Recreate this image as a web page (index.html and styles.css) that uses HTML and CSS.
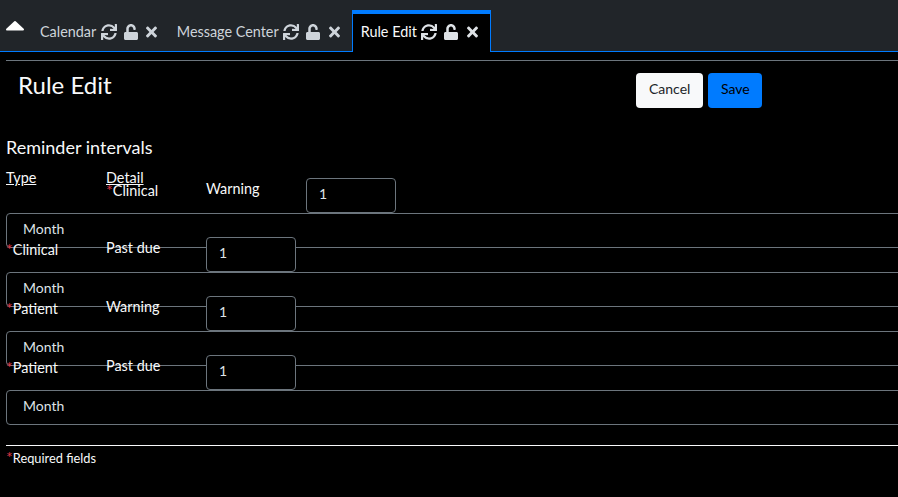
FILE: index.html
```html
<!DOCTYPE html>
<html lang="en">
<head>
<meta charset="utf-8">
<title>Rule Edit</title>
<link rel="stylesheet" href="styles.css">
</head>
<body>
<svg class="defs" width="0" height="0" aria-hidden="true">
  <symbol id="i-sync" viewBox="0 0 512 512"><path d="M440.65 12.57l4 82.77A247.16 247.16 0 0 0 255.83 8C134.73 8 33.91 94.92 12.29 209.82A12 12 0 0 0 24.09 224h49.05a12 12 0 0 0 11.67-9.26 175.91 175.91 0 0 1 317-56.94l-101.46-4.86a12 12 0 0 0-12.57 12v47.41a12 12 0 0 0 12 12H500a12 12 0 0 0 12-12V12a12 12 0 0 0-12-12h-47.37a12 12 0 0 0-11.98 12.57zM255.83 432a175.61 175.61 0 0 1-146-77.8l101.8 4.87a12 12 0 0 0 12.57-12v-47.4a12 12 0 0 0-12-12H12a12 12 0 0 0-12 12V500a12 12 0 0 0 12 12h47.35a12 12 0 0 0 12-12.6l-4.15-82.57A247.17 247.17 0 0 0 255.83 504c121.11 0 221.93-86.92 243.55-201.82a12 12 0 0 0-11.8-14.18h-49.05a12 12 0 0 0-11.67 9.26A175.86 175.86 0 0 1 255.83 432z"/></symbol>
  <symbol id="i-unlock" viewBox="0 0 448 512"><path d="M400 256H152V152.9c0-39.6 31.7-72.5 71.3-72.9 40-.4 72.7 32.1 72.7 72v16c0 13.3 10.7 24 24 24h32c13.3 0 24-10.7 24-24v-16C376 68 307.5-.3 223.5 0 139.5.3 72 69.5 72 153.5V256H48c-26.5 0-48 21.5-48 48v160c0 26.5 21.5 48 48 48h352c26.5 0 48-21.5 48-48V304c0-26.5-21.5-48-48-48z"/></symbol>
  <symbol id="i-times" viewBox="0 0 352 512"><path d="M242.72 256l100.07-100.07c12.28-12.28 12.28-32.19 0-44.48l-22.24-22.24c-12.28-12.28-32.19-12.28-44.48 0L176 189.28 75.93 89.21c-12.28-12.28-32.19-12.28-44.48 0L9.21 111.45c-12.28 12.28-12.28 32.19 0 44.48L109.28 256 9.21 356.07c-12.28 12.28-12.28 32.19 0 44.48l22.24 22.24c12.28 12.28 32.2 12.28 44.48 0L176 322.72l100.07 100.07c12.28 12.28 32.2 12.28 44.48 0l22.24-22.24c12.28-12.28 12.28-32.19 0-44.48L242.72 256z"/></symbol>
</svg>

<nav class="tabbar">
  <svg class="collapse" viewBox="0 0 20 11" width="20" height="11" aria-hidden="true"><polygon points="2,9.5 18,9.5 10,2"/></svg>
  <div class="tab">
    <span class="tab-label">Calendar</span>
    <svg class="ic ic-sync"><use href="#i-sync"/></svg>
    <svg class="ic ic-unlock"><use href="#i-unlock"/></svg>
    <svg class="ic ic-times"><use href="#i-times"/></svg>
  </div>
  <div class="tab">
    <span class="tab-label">Message Center</span>
    <svg class="ic ic-sync"><use href="#i-sync"/></svg>
    <svg class="ic ic-unlock"><use href="#i-unlock"/></svg>
    <svg class="ic ic-times"><use href="#i-times"/></svg>
  </div>
  <div class="tab active">
    <span class="tab-label">Rule Edit</span>
    <svg class="ic ic-sync"><use href="#i-sync"/></svg>
    <svg class="ic ic-unlock"><use href="#i-unlock"/></svg>
    <svg class="ic ic-times"><use href="#i-times"/></svg>
  </div>
</nav>

<main class="page">
  <hr class="rule-top">
  <header class="head">
    <h1>Rule Edit</h1>
    <div class="actions">
      <button class="btn btn-light" type="button">Cancel</button>
      <button class="btn btn-primary" type="button">Save</button>
    </div>
  </header>

  <h2>Reminder intervals</h2>
  <div class="col-heads">
    <span class="col"><u>Type</u></span>
    <span class="col"><u>Detail</u></span>
  </div>

  <div class="entry first">
    <div class="fields">
      <span class="col type"><span class="req">*</span>Clinical</span>
      <span class="col detail">Warning</span>
      <input class="ctl num" type="text" value="1" aria-label="Clinical warning">
    </div>
    <select class="ctl unit" aria-label="Clinical warning unit"><option>Month</option></select>
  </div>

  <div class="entry">
    <div class="fields">
      <span class="col type"><span class="req">*</span>Clinical</span>
      <span class="col detail">Past due</span>
      <input class="ctl num" type="text" value="1" aria-label="Clinical past due">
    </div>
    <select class="ctl unit" aria-label="Clinical past due unit"><option>Month</option></select>
  </div>

  <div class="entry">
    <div class="fields">
      <span class="col type"><span class="req">*</span>Patient</span>
      <span class="col detail">Warning</span>
      <input class="ctl num" type="text" value="1" aria-label="Patient warning">
    </div>
    <select class="ctl unit" aria-label="Patient warning unit"><option>Month</option></select>
  </div>

  <div class="entry">
    <div class="fields">
      <span class="col type"><span class="req">*</span>Patient</span>
      <span class="col detail">Past due</span>
      <input class="ctl num" type="text" value="1" aria-label="Patient past due">
    </div>
    <select class="ctl unit" aria-label="Patient past due unit"><option>Month</option></select>
  </div>

  <hr class="rule-bottom">
  <p class="note"><span class="req">*</span>Required fields</p>
</main>
</body>
</html>
```

FILE: styles.css
```css
* { box-sizing: border-box; }

html, body {
  margin: 0;
  height: 497px;
  overflow: hidden;
  background: #000;
  color: #f8f9fa;
  font-family: Lato, sans-serif;
  font-size: 14.4px;
}

.defs { position: absolute; }

.tabbar {
  display: flex;
  align-items: flex-end;
  height: 52px;
  background: #212529;
  border-bottom: 1px solid #007bff;
}

.collapse {
  align-self: flex-start;
  margin: 20px 6px 0 5px;
  fill: #fff;
  stroke: #fff;
  stroke-width: 2;
  stroke-linejoin: round;
  flex: none;
}

.tab {
  display: flex;
  align-items: center;
  height: 41px;
  padding: 0 11px 4px 8px;
  margin-bottom: -1px;
  color: #ced4da;
  font-size: 14.4px;
  white-space: nowrap;
  border: 1px solid transparent;
  border-top-width: 4px;
  border-bottom-width: 0;
}

.tab:first-of-type { padding-right: 9.5px; }

.tab.active {
  height: 42px;
  padding-right: 12px;
  color: #f8f9fa;
  background: #000;
  border-color: #007bff;
}

.ic { fill: #ced4da; height: 16px; display: block; flex: none; margin-top: 1px; }
.active .ic { fill: #dee2e6; }
.ic-sync { width: 16px; margin-left: 4.5px; }
.ic-unlock { width: 14px; margin-left: 7px; }
.ic-times { width: 11px; margin-left: 8.5px; }

.page { padding: 0 0 0 6px; }

.rule-top {
  margin: 8px 0 0;
  border: 0;
  height: 1px;
  background: #6c757d;
}

.head {
  display: flex;
  align-items: flex-start;
  height: 72px;
  padding: 9px 0 0 12px;
}

h1 {
  margin: 0;
  font-size: 24px;
  font-weight: 400;
  line-height: 29px;
  width: 618px;
  flex: none;
}

.actions { display: flex; gap: 5px; margin-top: 3px; }

.btn {
  height: 35px;
  padding: 0 12px 4px;
  border: 1px solid transparent;
  border-radius: 4px;
  font: 14px Lato, sans-serif;
  color: #212529;
}

.btn-light { background: #f8f9fa; }
.btn-primary { background: #007bff; color: #000; padding: 0 11.5px 4px; }

h2 {
  margin: 0;
  font-size: 18px;
  font-weight: 400;
  line-height: 20px;
  padding-top: 4px;
}

.col-heads {
  display: flex;
  height: 12px;
  margin-top: 12px;
}

.col {
  display: block;
  width: 100px;
  flex: none;
  line-height: 17px;
}

.entry + .entry { margin-top: -11px; }

.fields {
  display: flex;
  height: 35px;
  position: relative;
}

.entry.first .fields { margin-top: -3px; padding-left: 100px; }

.type { padding-top: 4px; }
.detail { padding-top: 2px; }
.req { color: #dc3545; font-size: 16px; line-height: 0; }

.ctl {
  height: 35px;
  background: #000;
  color: #dee2e6;
  border: 1px solid #6c757d;
  border-radius: 4px;
  font: 14px Lato, sans-serif;
  outline: 0;
}

.num {
  width: 90px;
  padding: 0 12px 5px;
  position: relative;
  z-index: 1;
}

.unit {
  display: block;
  width: 1200px;
  padding: 0 16px 4px;
  appearance: none;
}

.rule-bottom {
  margin: 20px 0 0;
  border: 0;
  height: 1px;
  background: #f8f9fa;
}

.note {
  margin: 5px 0 0;
  font-size: 12.8px;
  line-height: 15px;
}
```
